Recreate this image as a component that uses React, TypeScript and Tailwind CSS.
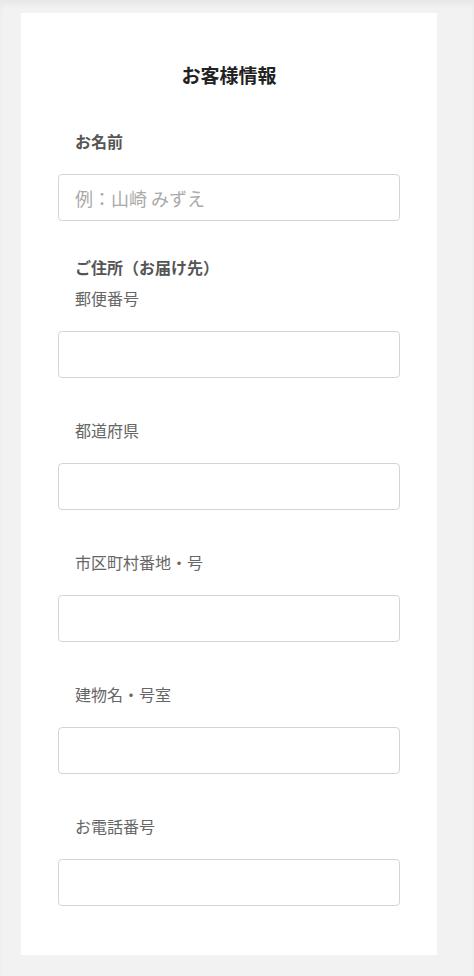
const fields = ['郵便番号', '都道府県', '市区町村番地・号', '建物名・号室', 'お電話番号'];

function TextBox({ placeholder }: { placeholder?: string }) {
  return (
    <input
      type="text"
      placeholder={placeholder}
      className="block w-full h-[47px] rounded-[4px] border border-[#d4d4d4] bg-white px-4 text-[18px] text-[#333] placeholder:text-[#a9a9a9] outline-none"
    />
  );
}

export default function App() {
  return (
    <div
      className="min-h-[976px] bg-[#f2f2f2] pt-[13px] pb-[21px] shadow-[inset_0_5px_5px_rgba(0,0,0,0.04)]"
      style={{ fontFamily: '"Noto Sans CJK JP", "Noto Sans", sans-serif' }}
    >
      <div className="ml-[21px] w-[416px] bg-white px-[37px] pt-[48px] pb-[49px]">
        <h1 className="text-center text-[19px] leading-[28px] font-bold text-[#222]">お客様情報</h1>

        <div className="mt-[40px] pl-[17px] text-[16px] leading-[24px] font-bold text-[#555]">お名前</div>
        <div className="mt-[21px]">
          <TextBox placeholder="例：山崎 みずえ" />
        </div>

        <div className="mt-[34px] pl-[17px] text-[16px] leading-[24px] font-bold text-[#555]">ご住所（お届け先）</div>

        {fields.map((label, i) => (
          <div key={label}>
            <div
              className={`${i === 0 ? 'mt-[7px]' : 'mt-[40px]'} pl-[17px] text-[16px] leading-[24px] text-[#666]`}
            >
              {label}
            </div>
            <div className="mt-[21px]">
              <TextBox />
            </div>
          </div>
        ))}
      </div>
    </div>
  );
}
